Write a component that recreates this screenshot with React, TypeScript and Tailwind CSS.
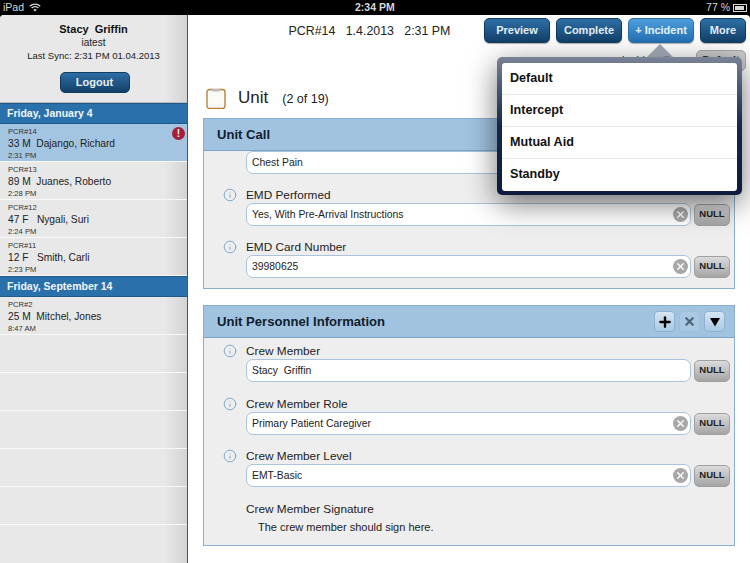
import React from 'react';
import { Plus, X, Info } from 'lucide-react';

const font = 'font-["Liberation_Sans",Arial,sans-serif]';

const Day = ({ label }: { label: string }) => (
  <div className="h-[21px] bg-[#2a70ab] border-y border-[#1f5a8c] pl-[7px] flex items-center text-[10.5px] font-bold text-[#f2f6fa]">
    {label}
  </div>
);

const Row = ({ pcr, who, time, active }: { pcr: string; who: string; time: string; active?: boolean }) => (
  <div className={`relative h-[38px] border-b border-[#f8f8f8] pl-[8px] pt-[3px] text-[#222] ${active ? 'bg-[#a3c5e2]' : ''}`}>
    <div className="text-[7.6px] leading-[10px] text-[#333]">{pcr}</div>
    <div className="text-[10.2px] leading-[14px] whitespace-pre">{who}</div>
    <div className="text-[7.6px] leading-[10px] text-[#333]">{time}</div>
    {active && (
      <div className="absolute right-[2px] top-[3px] w-[13px] h-[13px] rounded-full bg-[#a81c3c] flex items-center justify-center text-white text-[10px] font-bold">!</div>
    )}
  </div>
);

const TopBtn = ({ label, active, w }: { label: string; active?: boolean; w: string }) => (
  <div className={`${w} h-[25px] rounded-[5px] flex items-center justify-center text-[11px] font-bold border shadow-[0_1px_1px_rgba(0,0,0,0.3)] ${active ? 'bg-gradient-to-b from-[#4f9edb] to-[#2270b4] border-[#2a6fa8] text-[#e8f2fa]' : 'bg-gradient-to-b from-[#2e6fa6] to-[#134069] border-[#123b5f] text-[#e4edf5]'}`}>
    {label}
  </div>
);

const InfoIcon = () => <Info className="w-[14px] h-[14px] text-[#7fa9cf]" strokeWidth={1.7} />;

const Input = ({ value, clear = true }: { value: string; clear?: boolean }) => (
  <div className="flex items-center gap-[3px]">
    <div className="flex-1 h-[23px] rounded-[7px] bg-white border border-[#a9c4dc] flex items-center pl-[5px] pr-[2px] text-[10.4px] text-[#222] whitespace-pre">
      <span className="flex-1 pt-[1px]">{value}</span>
      {clear && (
        <span className="w-[15px] h-[15px] rounded-full bg-[#a8a8a8] flex items-center justify-center">
          <X className="w-[11px] h-[11px] text-white" strokeWidth={3} />
        </span>
      )}
    </div>
    <div className="w-[36px] h-[22px] rounded-[5px] bg-gradient-to-b from-[#dcdcdc] to-[#a5a5a5] border border-[#a0a0a0] flex items-center justify-center text-[9.5px] font-bold text-[#222]">
      NULL
    </div>
  </div>
);

const Field = ({ label, value, clear, className }: { label: string; value: string; clear?: boolean; className?: string }) => (
  <div className={`relative pl-[42px] pr-[4px] ${className || ''}`}>
    <div className="absolute left-[19px] top-[1px]"><InfoIcon /></div>
    <div className="h-[16px] leading-[16px] text-[11.8px] text-[#222]">{label}</div>
    <Input value={value} clear={clear} />
  </div>
);

const CardHead = ({ title, tools }: { title: string; tools?: boolean }) => (
  <div className="h-[32px] bg-[#a1c3e0] border-b border-[#7ba4c8] flex items-center pl-[13px] pr-[9px] text-[13.1px] font-bold text-[#10202e]">
    <span className="flex-1">{title}</span>
    {tools && (
      <div className="flex gap-[4px]">
        <span className="w-[21px] h-[21px] rounded-[4px] bg-gradient-to-b from-[#d6e6f3] to-[#a9c9e3] border border-[#8db2d1] flex items-center justify-center">
          <Plus className="w-[16px] h-[16px] text-black" strokeWidth={3.5} />
        </span>
        <span className="w-[21px] h-[21px] rounded-[4px] bg-[#a9c9e3] border border-[#9cbfdc] flex items-center justify-center">
          <X className="w-[13px] h-[13px] text-[#4a6478]" strokeWidth={4} />
        </span>
        <span className="w-[21px] h-[21px] rounded-[4px] bg-gradient-to-b from-[#d6e6f3] to-[#a9c9e3] border border-[#8db2d1] flex items-center justify-center">
          <svg width="12" height="10" viewBox="0 0 12 10"><path d="M1 1h10L6 9.5z" fill="#000" /></svg>
        </span>
      </div>
    )}
  </div>
);

export default function App() {
  return (
    <div className={`${font} relative w-[750px] h-[563px] overflow-hidden bg-black`}>
      {/* status bar */}
      <div className="h-[15px] bg-black text-[#d8d8d8] text-[10.5px] flex items-center justify-between px-[3px]">
        <div className="flex items-center gap-[5px]">
          <span>iPad</span>
          <svg width="12" height="9" viewBox="0 0 12 9" fill="none" stroke="#d8d8d8" strokeWidth="1.4">
            <path d="M.8 3.2a7.6 7.6 0 0 1 10.4 0" />
            <path d="M2.6 5a5 5 0 0 1 6.8 0" />
            <path d="M6 8.6 4.3 6.8a2.4 2.4 0 0 1 3.4 0z" fill="#d8d8d8" stroke="none" />
          </svg>
        </div>
        <span className="font-bold absolute left-[355px]">2:34 PM</span>
        <div className="flex items-center gap-[3px]">
          <span>77 %</span>
          <span className="w-[14px] h-[8px] border border-[#d8d8d8] p-[1px] flex"><span className="w-[9px] bg-[#d8d8d8]" /></span>
        </div>
      </div>

      <div className="flex h-[548px] bg-white rounded-t-[4px] overflow-hidden">
        {/* sidebar */}
        <aside className="w-[188px] shrink-0 border-r border-[#555] bg-[linear-gradient(90deg,#e8e8e8_88%,#d4d4d4_100%)]">
          <div className="h-[88px] pt-[8px] text-center text-[#222] flex flex-col items-center border-b border-[#bbb]">
            <div className="text-[11px] leading-[13px] font-bold whitespace-pre text-[#111]">Stacy  Griffin</div>
            <div className="text-[10px] leading-[13px]">iatest</div>
            <div className="text-[9.5px] leading-[13px]">Last Sync: 2:31 PM 01.04.2013</div>
            <div className="mt-[10px] ml-[2px] w-[70px] h-[21px] rounded-[5px] bg-gradient-to-b from-[#2e6fa6] to-[#134069] border border-[#123b5f] flex items-center justify-center text-[11px] font-bold text-[#e8eff6]">
              Logout
            </div>
          </div>
          <Day label="Friday, January 4" />
          <Row active pcr="PCR#14" who="33 M  Dajango, Richard" time="2:31 PM" />
          <Row pcr="PCR#13" who="89 M  Juanes, Roberto" time="2:28 PM" />
          <Row pcr="PCR#12" who="47 F   Nygali, Suri" time="2:24 PM" />
          <Row pcr="PCR#11" who="12 F   Smith, Carli" time="2:23 PM" />
          <Day label="Friday, September 14" />
          <Row pcr="PCR#2" who="25 M  Mitchel, Jones" time="8:47 AM" />
          <div className="h-[38px] border-b border-[#f8f8f8]" />
          <div className="h-[38px] border-b border-[#f8f8f8]" />
          <div className="h-[38px] border-b border-[#f8f8f8]" />
          <div className="h-[38px] border-b border-[#f8f8f8]" />
          <div className="h-[38px] border-b border-[#f8f8f8]" />
        </aside>

        {/* main */}
        <main className="flex-1 min-w-0 pt-[3px]">
          <div className="flex items-start pr-[4px]">
            <div className="w-[297px] pt-[4px] pl-[67px] text-center text-[12.4px] text-[#222] whitespace-pre">PCR#14   1.4.2013   2:31 PM</div>
            <div className="flex gap-[6px]">
              <TopBtn label="Preview" w="w-[66px]" />
              <TopBtn label="Complete" w="w-[66px]" />
              <TopBtn label="+ Incident" active w="w-[66px]" />
              <TopBtn label="More" w="w-[46px]" />
            </div>
          </div>
          <div className="mt-[7px] h-[21px] pr-[4px] flex items-center justify-end gap-[6px] text-[11px] text-[#333]">
            <span>Incident Type:</span>
            <span className="w-[50px] h-[21px] rounded-[5px] bg-[#ccc] border border-[#aaa] flex items-center justify-center font-bold">Default</span>
          </div>
          <div className="mt-[17px] h-[20px] ml-[18px] flex items-center">
            <svg width="20" height="21" viewBox="0 0 20 21" fill="none">
              <rect x="1" y="1.5" width="18" height="19" rx="2.5" fill="#fbfaf5" stroke="#b9803f" strokeWidth="1.4" />
              <rect x="5.5" y="1" width="9" height="2.5" rx="1" fill="#bdbdbd" />
            </svg>
            <span className="ml-[12px] text-[17px] text-[#222]">Unit</span>
            <span className="ml-[14px] text-[12.5px] text-[#222] mt-[2px]">(2 of 19)</span>
          </div>

          <section className="mt-[10px] ml-[15px] w-[532px] h-[171px] border border-[#8aaecd] bg-[#eeeeee]">
            <CardHead title="Unit Call" />
            <div className="pl-[42px] pr-[4px] pt-[0px]">
              <Input value="Chest Pain" clear={false} />
            </div>
            <Field className="mt-[13px]" label="EMD Performed" value="Yes, With Pre-Arrival Instructions" />
            <Field className="mt-[13px]" label="EMD Card Number" value="39980625" />
          </section>

          <section className="mt-[16px] ml-[15px] w-[532px] h-[241px] border border-[#8aaecd] bg-[#eeeeee]">
            <CardHead title="Unit Personnel Information" tools />
            <Field className="mt-[5px]" label="Crew Member" value="Stacy  Griffin" clear={false} />
            <Field className="mt-[14px]" label="Crew Member Role" value="Primary Patient Caregiver" />
            <Field className="mt-[13px]" label="Crew Member Level" value="EMT-Basic" />
            <div className="mt-[14px] pl-[42px]">
              <div className="h-[16px] leading-[16px] text-[11.8px] text-[#222]">Crew Member Signature</div>
              <div className="mt-[2px] pl-[12px] h-[16px] leading-[16px] text-[11px] text-[#222]">The crew member should sign here.</div>
            </div>
          </section>
        </main>
      </div>

      {/* incident type popover */}
      <div className="absolute left-[497px] top-[57px] w-[245px] h-[138px] rounded-[5px] bg-gradient-to-b from-[#7a8296] via-[#16264a] to-[#0d1c3c] px-[5px] pt-[6px] pb-[4px] shadow-[0_8px_30px_rgba(0,0,0,0.55)]">
        <svg className="absolute left-[149px] top-[-13px]" width="28" height="14" viewBox="0 0 28 14">
          <path d="M0 14 14 0l14 14z" fill="#7f8798" fillOpacity="0.8" />
        </svg>
        <div className="bg-white rounded-[3px] h-full font-bold text-[12.6px] text-[#111]">
          <div className="h-[32px] pl-[8px] flex items-center border-b border-[#e6e6e6]">Default</div>
          <div className="h-[32px] pl-[8px] flex items-center border-b border-[#e6e6e6]">Intercept</div>
          <div className="h-[32px] pl-[8px] flex items-center border-b border-[#e6e6e6]">Mutual Aid</div>
          <div className="h-[31px] pl-[8px] flex items-center">Standby</div>
        </div>
      </div>
    </div>
  );
}
